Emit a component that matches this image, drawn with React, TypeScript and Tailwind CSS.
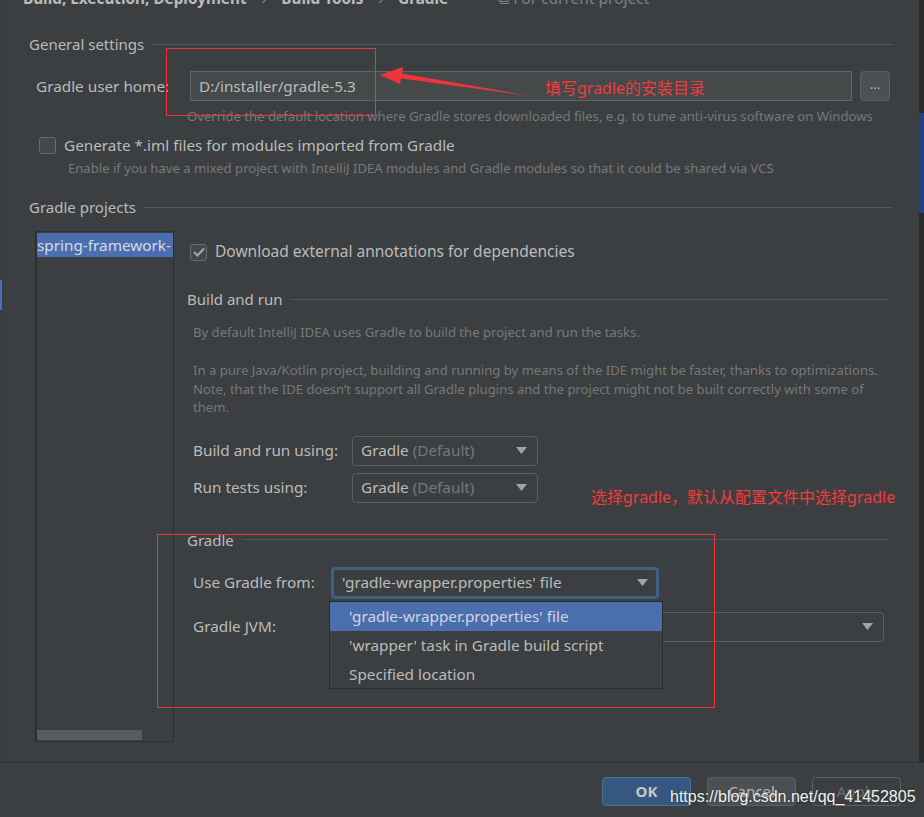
import React from "react";

function Caret() {
  return (
    <svg width="11" height="7" viewBox="0 0 11 7">
      <path d="M0 0h11L5.5 7z" fill="#a4a4a4" />
    </svg>
  );
}

function SectionTitle({ label, className = "" }: { label: string; className?: string }) {
  return (
    <div className={`flex items-center h-5 ${className}`}>
      <span className="text-[15px] text-[#bbbbbb] leading-5">{label}</span>
      <div className="ml-2 flex-1 h-px bg-[#545556]" />
    </div>
  );
}

function Combo({
  width,
  value,
  hint,
  focused,
  height = "h-[30px]",
}: {
  width: string;
  value?: string;
  hint?: string;
  focused?: boolean;
  height?: string;
}) {
  return (
    <div
      className={`${width} ${height} flex items-center justify-between rounded-[4px] bg-[#3c3f41] ${
        focused ? "border-[3px] border-[#3d6185] pl-[8px] pr-[8px]" : "border border-[#5e6060] pl-[8px] pr-[10px]"
      }`}
    >
      <span className="text-[15.3px] text-[#bbbbbb] whitespace-nowrap">
        {value}
        {hint && <span className="text-[#787878]"> {hint}</span>}
      </span>
      <Caret />
    </div>
  );
}

function CheckBox({ checked }: { checked?: boolean }) {
  return (
    <div className="w-[17px] h-[17px] rounded-[3px] border border-[#6b6b6b] bg-[#43494a] flex items-center justify-center">
      {checked && (
        <svg width="12" height="10" viewBox="0 0 12 10">
          <path d="M1 5l3.5 3.5L11 1.5" stroke="#a9a9a9" strokeWidth="2" fill="none" />
        </svg>
      )}
    </div>
  );
}

export default function App() {
  return (
    <div className="relative w-[924px] h-[817px] overflow-hidden bg-[#3c3f41] font-['Noto_Sans','Noto_Sans_CJK_SC',sans-serif] text-[#bbbbbb]">
      {/* main area */}
      <div className="flex h-[762px]">
        {/* left edge strip */}
        <div className="w-[3px] bg-[#393c42] flex flex-col">
          <div className="h-[280px]" />
          <div className="h-[30px] w-[2px] bg-[#4a6fae]" />
        </div>

        <div className="flex-1 flex flex-col">
          {/* breadcrumb */}
          <div className="h-[14px] overflow-hidden pl-[20px]">
            <div className="-mt-[12px] flex items-center whitespace-nowrap text-[15.3px] leading-5">
              <span className="font-bold text-[#bbbbbb]">Build, Execution, Deployment</span>
              <span className="mx-[15px] text-[#8a8a8a]">›</span>
              <span className="font-bold text-[#bbbbbb]">Build Tools</span>
              <span className="mx-[15px] text-[#8a8a8a]">›</span>
              <span className="font-bold text-[#bbbbbb]">Gradle</span>
              <span className="ml-[50px] text-[#808080] text-[15.5px]">⧉ For current project</span>
            </div>
          </div>

          {/* General settings */}
          <div className="pl-[26px] pr-[26px] mt-[20px]">
            <SectionTitle label="General settings" />
          </div>

          <div className="mt-[17px] pl-[33px] flex items-center h-[30px]">
            <span className="w-[154px] text-[15.3px] whitespace-nowrap">Gradle user home:</span>
            <div className="w-[662px] h-[30px] bg-[#45494a] border border-[#646464] flex items-center pl-[8px] text-[15.3px]">
              D:/installer/gradle-5.3
            </div>
            <div className="ml-[8px] w-[30px] h-[30px] rounded-[4px] bg-[#4c5052] border border-[#5e6060] flex items-center justify-center text-[13px] leading-none pb-[4px]">
              ...
            </div>
          </div>
          <div className="pl-[184px] mt-[6px] h-[18px] text-[13.1px] leading-[18px] text-[#787878] whitespace-nowrap">
            Override the default location where Gradle stores downloaded files, e.g. to tune anti-virus software on Windows
          </div>

          <div className="mt-[10px] pl-[36px] flex items-center h-5">
            <CheckBox />
            <span className="ml-[8px] text-[15.3px] whitespace-nowrap">Generate *.iml files for modules imported from Gradle</span>
          </div>
          <div className="pl-[65px] mt-[4px] h-[18px] text-[13.1px] leading-[18px] text-[#787878] whitespace-nowrap">
            Enable if you have a mixed project with IntelliJ IDEA modules and Gradle modules so that it could be shared via VCS
          </div>

          {/* Gradle projects */}
          <div className="pl-[26px] pr-[26px] mt-[20px]">
            <SectionTitle label="Gradle projects" />
          </div>

          <div className="mt-[14px] flex pl-[32px]">
            {/* project list */}
            <div className="w-[139px] h-[511px] border-l-2 border-t border-b border-r border-[#2e2f30] flex flex-col justify-between">
              <div className="mt-[1px] h-[24px] bg-[#4b6eaf] text-[15.3px] text-[#d4dbe6] leading-[24px] whitespace-nowrap overflow-hidden">
                spring-framework-
              </div>
              <div className="mb-[1px] h-[10px] w-[105px] bg-[#5b5c5d]" />
            </div>

            {/* right panel */}
            <div className="ml-[13px] w-[702px] flex flex-col">
              <div className="mt-[11px] pl-[3px] flex items-center h-5">
                <CheckBox checked />
                <span className="ml-[8px] text-[15.5px] whitespace-nowrap">Download external annotations for dependencies</span>
              </div>

              <SectionTitle label="Build and run" className="mt-[27px]" />

              <div className="mt-[14px] pl-[6px] h-[18px] text-[13.1px] leading-[18px] text-[#787878] whitespace-nowrap">
                By default IntelliJ IDEA uses Gradle to build the project and run the tasks.
              </div>
              <div className="mt-[20px] pl-[6px] text-[13.1px] leading-[18.5px] text-[#787878] w-[700px]">
                In a pure Java/Kotlin project, building and running by means of the IDE might be faster, thanks to optimizations.
                <br />
                Note, that the IDE doesn’t support all Gradle plugins and the project might not be built correctly with some of
                <br />
                them.
              </div>

              <div className="mt-[19px] pl-[6px] flex items-center">
                <span className="w-[159px] text-[15.3px] whitespace-nowrap">Build and run using:</span>
                <Combo width="w-[186px]" value="Gradle" hint="(Default)" />
              </div>
              <div className="mt-[7px] pl-[6px] flex items-center">
                <span className="w-[159px] text-[15.3px] whitespace-nowrap">Run tests using:</span>
                <Combo width="w-[186px]" value="Gradle" hint="(Default)" />
              </div>

              <SectionTitle label="Gradle" className="mt-[27px]" />

              <div className="mt-[17px] pl-[6px] flex items-center">
                <span className="w-[138px] text-[15.3px] whitespace-nowrap">Use Gradle from:</span>
                <Combo width="w-[328px]" height="h-[32px]" value="'gradle-wrapper.properties' file" focused />
              </div>
              <div className="mt-[13px] pl-[6px] flex items-center">
                <span className="w-[138px] text-[15.3px] whitespace-nowrap">Gradle JVM:</span>
                <Combo width="w-[553px]" />
              </div>
            </div>
          </div>
        </div>

        {/* right edge strip */}
        <div className="w-[5px] bg-[#2b2b2b] flex flex-col">
          <div className="h-[113px]" />
          <div className="h-[100px] bg-[#214283]" />
        </div>
      </div>

      {/* footer */}
      <div className="h-px bg-[#2f3133]" />
      <div className="flex justify-end gap-[16px] pr-[23px] pt-[14px]">
        <div className="w-[89px] h-[29px] rounded-[4px] bg-[#365880] border border-[#4c708c] flex items-center justify-center text-[15px] font-bold text-[#c8c8c8]">
          OK
        </div>
        <div className="w-[89px] h-[29px] rounded-[4px] bg-[#4c5052] border border-[#5e6060] flex items-center justify-center text-[15px] text-[#bbbbbb]">
          Cancel
        </div>
        <div className="w-[89px] h-[29px] rounded-[4px] bg-[#3c3f41] border border-[#5e6060] flex items-center justify-center text-[15px] text-[#6f6f6f]">
          Apply
        </div>
      </div>

      {/* dropdown popup */}
      <div className="absolute left-[329px] top-[601px] w-[334px] h-[88px] bg-[#3c3f41] border border-[#2b2b2b] text-[15.3px] text-[#bbbbbb]">
        <div className="h-[29px] bg-[#4b6eaf] pl-[19px] leading-[29px] text-[#d0d6df] whitespace-nowrap">'gradle-wrapper.properties' file</div>
        <div className="h-[29px] pl-[19px] leading-[29px] whitespace-nowrap">'wrapper' task in Gradle build script</div>
        <div className="h-[29px] pl-[19px] leading-[29px] whitespace-nowrap">Specified location</div>
      </div>

      {/* annotations */}
      <div className="absolute left-[166px] top-[48px] w-[210px] h-[68px] border border-[#e8373a]" />
      <div className="absolute left-[157px] top-[534px] w-[558px] h-[174px] border border-[#e8373a]" />
      <svg className="absolute left-0 top-0" width="924" height="817">
        <path d="M531 96 L398 78 L399 73 Z" fill="#f0353a" />
        <path d="M380 75 L403 67 L400 84 Z" fill="#f0353a" />
      </svg>
      <div className="absolute left-[545px] top-[77px] text-[16px] leading-[22px] text-[#f23b3b] whitespace-nowrap">
        填写gradle的安装目录
      </div>
      <div className="absolute left-[591px] top-[486px] text-[16px] leading-[22px] text-[#f23b3b] whitespace-nowrap">
        选择gradle，默认从配置文件中选择gradle
      </div>

      {/* watermark */}
      <div className="absolute left-[670px] top-[786px] text-[16px] leading-[22px] text-[#f2f2f2] font-['Liberation_Sans',sans-serif] whitespace-nowrap [text-shadow:0_0_2px_#2a2a2a]">
        https://blog.csdn.net/qq_41452805
      </div>
    </div>
  );
}
